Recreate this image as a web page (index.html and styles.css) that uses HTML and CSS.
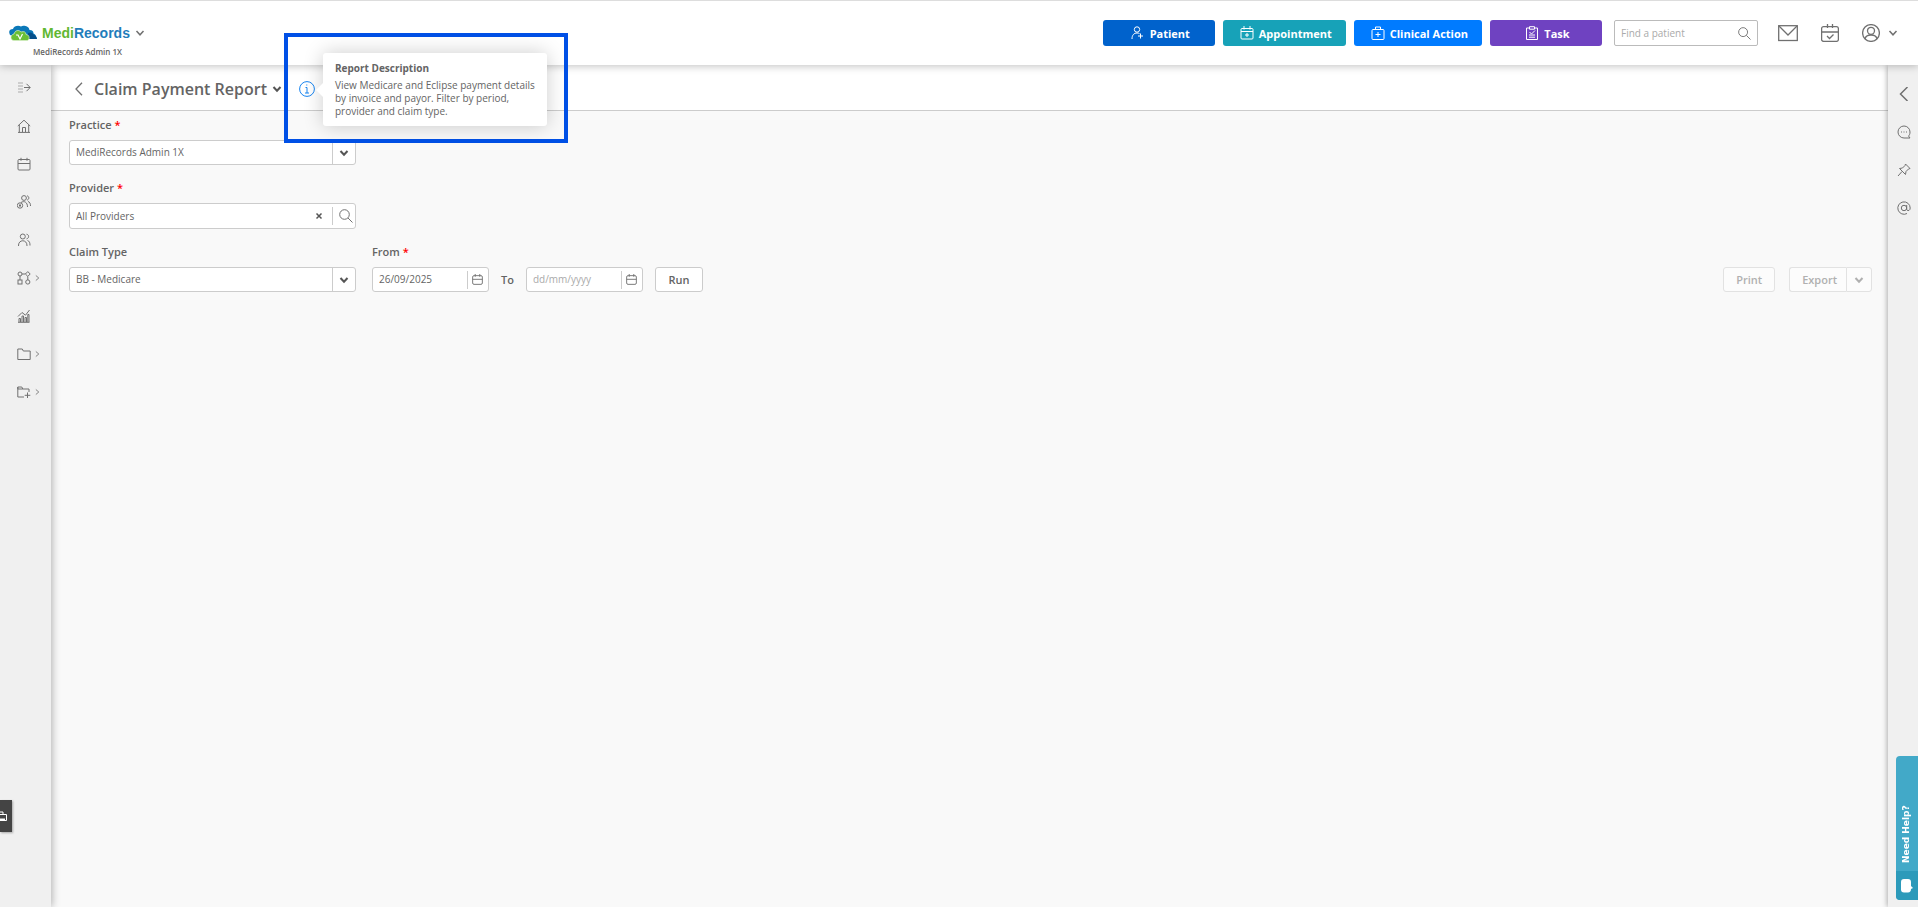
FILE: index.html
```
<!DOCTYPE html>
<html lang="en">
<head>
<meta charset="UTF-8">
<title>Claim Payment Report</title>
<link rel="stylesheet" href="styles.css">
</head>
<body>

<!-- shared icons -->
<svg class="sprite" aria-hidden="true">
  <symbol id="chev" viewBox="0 0 10 10"><path d="M1.500 3l3.500 3.800L8.500 3"/></symbol>
  <symbol id="chevRight" viewBox="0 0 6 8"><path d="M1 1l3.500 3L1 7"/></symbol>
  <symbol id="lens" viewBox="0 0 14 14"><circle cx="5.500" cy="5.500" r="4.800"/><path d="M9 9l4.500 4.500"/></symbol>
  <symbol id="cal" viewBox="0 0 12 12"><rect x=".7" y="1.800" width="10.600" height="9.500" rx="1.500"/><path d="M.7 5.800h10.600M3.500 0v3M8.500 0v3"/></symbol>
</svg>

<header class="header">
  <div class="brand">
    <a href="#" class="logo" aria-label="MediRecords">
      <svg class="cloud" viewBox="0 0 28 16">
        <path fill="#0b78b8" d="M1 10C-1 6 1 4 4 4 5 1 9 0 12 1.500 14 0 20 1 20.500 5c3 0 4 1.500 4 3.500 2 .5 3 3 3.500 5.500H12z"/>
        <path fill="#064f8a" d="M19 8c3-1.500 5 0 5.500 1.500 2 .5 3 2.500 3.500 4.500h-9z"/>
        <path fill="#6abf36" stroke="#d7efc6" stroke-width=".7" d="M5 15.500c-4 0-4-6 0-6.500C6 5 10 4.500 12 7c3-1 5 0 5 2.500 4 0 4 6 1 6z"/>
        <path fill="none" stroke="#fff" stroke-width="1.200" d="M7 10h2l2 4 2.500-5"/>
      </svg>
      <span class="name"><span class="medi">Medi</span>Records</span>
    </a>
    <button class="plain" aria-label="Change practice"><svg class="ic chev"><use href="#chev"/></svg></button>
    <div class="practice_name">MediRecords Admin 1X</div>
  </div>

  <div class="actions">
    <button class="act patient">
      <svg class="ic" viewBox="0 0 14 14"><circle cx="6" cy="3.500" r="2.700"/><path d="M1 13c0-4 2-6 5-6 1 0 1.800.2 2.500.6M9.500 7.500v5M7 10h5"/></svg>Patient</button>
    <button class="act appointment">
      <svg class="ic" viewBox="0 0 14 14"><rect x="1" y="2.500" width="12" height="10.500" rx="1"/><path d="M1 5.500h12M4 0v3.500M10 0v3.500M7 7v4M5 9h4"/></svg>Appointment</button>
    <button class="act clinical">
      <svg class="ic" viewBox="0 0 14 14"><rect x="1" y="3.500" width="12" height="10" rx="1"/><path d="M4.500 3V1h5v2M7 6v5M4.500 8.500h5"/></svg>Clinical Action</button>
    <button class="act task">
      <svg class="ic" viewBox="0 0 14 14"><path d="M4.500 2H1.500v11.500h11V2h-3M4.500.7h5v2.500h-5zM4.500 6l2 2L10 4.500M4 9h6M4 11.200h6"/></svg>Task</button>
  </div>

  <form class="search">
    <input type="text" placeholder="Find a patient" aria-label="Find a patient">
    <button type="button" class="plain" aria-label="Search"><svg class="ic lens"><use href="#lens"/></svg></button>
  </form>

  <div class="tools">
    <button class="plain" aria-label="Messages"><svg class="ic mail" viewBox="0 0 20 18"><rect x=".7" y="1.700" width="18.600" height="14.800"/><path d="M1 2l9 9 9-9"/></svg></button>
    <button class="plain" aria-label="Calendar"><svg class="ic" viewBox="0 0 18 18"><rect x=".6" y="2.600" width="16.800" height="14.800" rx="2"/><path d="M.6 8h16.800M6.500 0v4M11.500 0v4M6 12l2.500 2.500 4-4"/></svg></button>
    <button class="plain user" aria-label="Account">
      <svg class="ic" viewBox="0 0 18 18"><circle cx="9" cy="9" r="8.400"/><circle cx="9" cy="6.800" r="3.500"/><path d="M3 15c.5-3 3-4 6-4s5.500 1 6 4"/></svg>
      <svg class="ic chev"><use href="#chev"/></svg>
    </button>
  </div>
</header>

<div class="page">
  <nav class="menu">
    <a href="#" aria-label="Expand"><svg class="ic" viewBox="0 0 14 14"><path class="faint" d="M1 2h5M1 5h5M1 8h5M1 11h5"/><path d="M7 6.500h6M9.500 2.800l3.700 3.700-3.700 3.700"/></svg></a>
    <a href="#" aria-label="Home"><svg class="ic" viewBox="0 0 14 14"><path d="M.8 7L7 1.200 13.200 7M2.300 6v7.300M11.700 6v7.300M1 13.400h12M5.500 13V8.500h3V13"/></svg></a>
    <a href="#" aria-label="Appointments"><svg class="ic" viewBox="0 0 14 14"><rect x="1" y="2.500" width="12" height="10.500" rx="1"/><path d="M1 6.500h12M4 .8v3M10 .8v3"/></svg></a>
    <a href="#" aria-label="Billing"><svg class="ic" viewBox="0 0 14 14"><circle cx="7" cy="3" r="2.400"/><path d="M10 .8c2.400.4 2.400 3.800 0 4.300M4 7.500c3-2 6.500-.5 6.500 4.500M11 6.500c2 .5 2.500 2.500 2.500 4.500"/><circle cx="3" cy="10.500" r="2.700"/><path d="M3 9v3M2 10.500h2"/></svg></a>
    <a href="#" aria-label="Patients"><svg class="ic" viewBox="0 0 14 14"><circle cx="5.800" cy="3.500" r="2.500"/><path d="M1.500 13c-.5-7 9-7 8.500 0M9.500 1.200c2.800.3 2.800 4.200 0 4.700M10.500 7.500c2 .5 2.500 2.500 2.500 5"/></svg></a>
    <a href="#" aria-label="Workflow"><svg class="ic" viewBox="0 0 14 14"><circle cx="3" cy="3" r="2"/><path d="M10.800.6l2.400 2.400-2.400 2.400L8.400 3zM5 3h3.400M3 5v4M10.800 5.500V9"/><rect x="1" y="9" width="4" height="4"/><circle cx="10.800" cy="11" r="2.100"/></svg><svg class="ic arr"><use href="#chevRight"/></svg></a>
    <a href="#" aria-label="Reports"><svg class="ic" viewBox="0 0 14 14"><path d="M1 13.300h11.500M2 13V9.500h1.500V13M5 13V7h1.500v6M8 13V8.500h1.500V13M10.800 13V5.500H12V13M1 7.500l4-4 3.500 2.700L12.500 1"/></svg></a>
    <a href="#" aria-label="Files"><svg class="ic" viewBox="0 0 14 14"><path d="M.8 12.500V2h4.500l1 2h6.900v8.500z"/></svg><svg class="ic arr"><use href="#chevRight"/></svg></a>
    <a href="#" aria-label="Add file"><svg class="ic" viewBox="0 0 14 14"><path d="M7 12H.8V2h4l1 2H12v3M.8 2v2h5M10.500 7.500v5.500M7.700 10.300h5.600"/></svg><svg class="ic arr"><use href="#chevRight"/></svg></a>
  </nav>

  <main class="main">
    <div class="title_bar">
      <a href="#" class="back" aria-label="Back"><svg class="ic" viewBox="0 0 8 14"><path d="M7 .7L1 7l6 6.300"/></svg></a>
      <h1>Claim Payment Report</h1>
      <button class="plain" aria-label="Change report"><svg class="ic chev bold"><use href="#chev"/></svg></button>
      <div class="info">
        <button class="plain" aria-label="Report description"><svg class="ic info_icon" viewBox="0 0 16 16"><circle cx="8" cy="8" r="7.400"/><path d="M6.500 6.500H8V12M6 12h4M7.300 4h1"/></svg></button>
        <div class="highlight"></div>
        <div class="tooltip" role="tooltip">
          <strong>Report Description</strong>
          <p>View Medicare and Eclipse payment details by invoice and payor. Filter by period, provider and claim type.</p>
        </div>
      </div>
    </div>

    <form class="filters">
      <div class="field">
        <label for="practice">Practice <span class="req">*</span></label>
        <div class="box">
          <select id="practice"><option>MediRecords Admin 1X</option></select>
          <span class="drop"><svg class="ic chev bold"><use href="#chev"/></svg></span>
        </div>
      </div>
      <div class="field">
        <label for="provider">Provider <span class="req">*</span></label>
        <div class="box lookup">
          <input type="text" id="provider" value="All Providers">
          <button type="button" class="plain clear" aria-label="Clear"><svg class="ic bold" viewBox="0 0 8 8"><path d="M1.500 1.500l5 5M6.500 1.500l-5 5"/></svg></button>
          <button type="button" class="plain find" aria-label="Find provider"><svg class="ic lens"><use href="#lens"/></svg></button>
        </div>
      </div>
      <div class="row">
        <div class="field">
          <label for="claim">Claim Type</label>
          <div class="box">
            <select id="claim"><option>BB - Medicare</option></select>
            <span class="drop"><svg class="ic chev bold"><use href="#chev"/></svg></span>
          </div>
        </div>
        <div class="field date">
          <label for="from">From <span class="req">*</span></label>
          <div class="box">
            <input type="text" id="from" value="26/09/2025">
            <button type="button" class="plain pick" aria-label="Pick from date"><svg class="ic cal"><use href="#cal"/></svg></button>
          </div>
        </div>
        <label for="to" class="to">To</label>
        <div class="field date">
          <div class="box">
            <input type="text" id="to" placeholder="dd/mm/yyyy">
            <button type="button" class="plain pick" aria-label="Pick to date"><svg class="ic cal"><use href="#cal"/></svg></button>
          </div>
        </div>
        <button type="button" class="btn run">Run</button>
        <button type="button" class="btn print" disabled>Print</button>
        <div class="split">
          <button type="button" class="btn" disabled>Export</button>
          <button type="button" class="btn more" disabled aria-label="Export options"><svg class="ic chev bold"><use href="#chev"/></svg></button>
        </div>
      </div>
    </form>
  </main>

  <aside class="side">
    <a href="#" aria-label="Open panel"><svg class="ic big" viewBox="0 0 14 14"><path d="M10.500 0L3.500 7l7 7"/></svg></a>
    <a href="#" aria-label="Comments"><svg class="ic" viewBox="0 0 14 14"><path d="M13 13H7a6 6 0 1 1 6-6c0 2-.5 3-1.500 4zM4 7h1M6.500 7h1M9 7h1"/></svg></a>
    <a href="#" aria-label="Pinned"><svg class="ic" viewBox="0 0 14 14"><path d="M8.500 1L13 5.500l-1.500.5-2.500 2.500-.5 3L2.500 5.500l3-.5L8 2.500zM5 8.500L1 13"/></svg></a>
    <a href="#" aria-label="Mentions"><svg class="ic" viewBox="0 0 14 14"><circle cx="7" cy="7" r="2.700"/><path d="M9.700 4v4.200c0 2 3.500 2 3.500-1.200A6.200 6.200 0 1 0 10 12.500"/></svg></a>
  </aside>
</div>

<button class="tab" aria-label="Toolbox"><svg viewBox="0 0 12 14"><path fill="none" stroke="#fff" d="M0 3h3v2M0 5.500h6.500v6H0"/><path fill="#fff" d="M0 9.500h5v2H0z"/></svg></button>

<button class="help">
  <span class="help_text">Need Help?</span>
  <span class="help_chat"><svg viewBox="0 0 12 14"><path fill="#fff" d="M3 0h4c2 0 3 1 3 3v4l2 2-2 1c0 2-1 3.500-3 3.500H3c-2 0-3-1-3-3V3c0-2 1-3 3-3z"/></svg></span>
</button>

</body>
</html>
```
FILE: styles.css
```
* {
  box-sizing: border-box;
}
html, body {
  height: 100%;
  margin: 0;
}
body {
  display: flex;
  flex-direction: column;
  overflow: hidden;
  font: 500 10px/13px "Open Sans", "Noto Sans", sans-serif;
  color: #646464;
  background: #f9f9f9;
}
button, input, select {
  font: inherit;
  color: inherit;
}
a {
  color: inherit;
  text-decoration: none;
}
.sprite {
  display: none;
}

/* icons */
.ic {
  display: block;
  flex: none;
  width: 14px;
  height: 14px;
  fill: none;
  stroke: #707070;
  stroke-width: 1;
}
.chev {
  width: 10px;
  height: 10px;
  stroke-width: 1.5;
}
.bold {
  stroke: #555;
  stroke-width: 2;
}
.plain {
  display: flex;
  align-items: center;
  padding: 0;
  border: 0;
  background: none;
  cursor: pointer;
}

/* header */
.header {
  position: relative;
  z-index: 2;
  display: flex;
  align-items: flex-start;
  height: 65px;
  padding: 19px 20px 0 9px;
  border-top: 1px solid #ddd;
  background: #fff;
  box-shadow: 0 1px 8px rgba(0,0,0,0.25);
}
.brand {
  display: grid;
  grid-template-columns: auto auto;
  column-gap: 5px;
  align-items: center;
  margin-right: auto;
}
.logo {
  display: flex;
  align-items: center;
  gap: 5px;
}
.cloud {
  width: 28px;
  height: 16px;
}
.name {
  font: bold 14px/26px "Liberation Sans", Arial, sans-serif;
  color: #1f7dbb;
}
.medi {
  color: #62b832;
}
.practice_name {
  grid-column: 1 / 3;
  padding-left: 24px;
  font-size: 8px;
  font-weight: 600;
  line-height: 12px;
}
.actions {
  display: flex;
  gap: 8px;
  margin-right: 12px;
}
.act {
  display: flex;
  align-items: center;
  justify-content: center;
  gap: 5px;
  min-width: 112px;
  height: 26px;
  padding: 0 14px 0 17px;
  border: 0;
  border-radius: 3px;
  font-size: 11px;
  font-weight: 700;
  color: #fff;
  cursor: pointer;
}
.act .ic {
  stroke: #fff;
}
.patient { background: #0062cc; }
.appointment { background: #17a2b8; }
.clinical { background: #007bff; }
.task { background: #6f42c1; }
.search {
  display: flex;
  align-items: center;
  width: 144px;
  height: 26px;
  padding: 0 6px;
  border: 1px solid #bbb;
  border-radius: 2px;
}
.search input {
  flex: 1;
  min-width: 0;
  padding: 0;
  border: 0;
  outline: 0;
  background: none;
}
::placeholder {
  color: #aaa;
  opacity: 1;
}
.search .lens {
  width: 13px;
  height: 13px;
}
.tools {
  display: flex;
  align-items: center;
  gap: 23px;
  height: 26px;
  padding-left: 20px;
}
.tools .ic {
  width: 18px;
  height: 18px;
  stroke-width: 1.3;
}
.tools .mail {
  width: 20px;
}
.tools .chev {
  width: 10px;
  height: 10px;
  stroke-width: 1.5;
}
.user {
  gap: 8px;
}

/* page */
.page {
  display: flex;
  flex: 1;
  min-height: 0;
}
.menu, .side {
  position: relative;
  z-index: 1;
  display: flex;
  flex-direction: column;
  flex: none;
  background: #f0f0f0;
}
.menu {
  gap: 24px;
  width: 51px;
  padding: 16px 0 0 17px;
  box-shadow: 1px 0 8px rgba(0,0,0,0.3);
}
.menu a {
  display: flex;
  align-items: center;
  gap: 4px;
}
.menu .arr {
  width: 5px;
  height: 8px;
}
.faint {
  stroke: #aaa;
}
.side {
  gap: 24px;
  align-items: center;
  width: 30px;
  padding: 22px 0 0 1px;
  box-shadow: -1px 0 5px rgba(0,0,0,0.3);
}
.big {
  stroke-width: 1.5;
}
.main {
  flex: 1;
  min-width: 0;
}

/* title */
.title_bar {
  display: flex;
  align-items: center;
  height: 46px;
  padding: 2px 0 0 24px;
  border-bottom: 1px solid #ccc;
  background: #fff;
}
.back .ic {
  width: 8px;
  stroke-width: 1.3;
}
h1 {
  margin: 0 5px 0 11px;
  font-size: 16px;
  font-weight: 600;
  line-height: 22px;
}
.info {
  position: relative;
  z-index: 3;
  margin-left: 17px;
}
.info_icon {
  width: 16px;
  height: 16px;
  stroke: #1784f0;
}
.highlight {
  position: absolute;
  top: -48px;
  left: -15px;
  width: 284px;
  height: 110px;
  border: 4px solid #0050e6;
  pointer-events: none;
}
.tooltip {
  position: absolute;
  top: -28px;
  left: 24px;
  width: 224px;
  padding: 9px 8px 8px 12px;
  border-radius: 3px;
  background: #fff;
  box-shadow: 0 0 20px rgba(0,0,0,0.2);
}
.tooltip:before {
  content: "";
  position: absolute;
  top: 30px;
  left: -7px;
  border: 7px solid transparent;
  border-left: 0;
  border-right-color: #fff;
}
.tooltip p {
  margin: 4px 0 0;
  font-weight: 400;
}

/* filters */
.filters {
  display: flex;
  flex-direction: column;
  gap: 15px;
  padding: 6px 16px 0 18px;
}
.field {
  width: 287px;
}
.date {
  width: 117px;
}
.field label, .to {
  display: block;
  font-size: 11px;
  font-weight: 600;
  line-height: 16px;
}
.field label {
  margin-bottom: 7px;
}
.req {
  color: #f00;
}
.box {
  display: grid;
  grid-template-columns: 1fr auto;
  height: 25px;
  border: 1px solid #ccc;
  border-radius: 3px;
  background: #fff;
}
.box select {
  grid-area: 1 / 1 / 2 / 3;
  padding: 0 28px 0 6px;
  border: 0;
  outline: 0;
  background: none;
  -webkit-appearance: none;
  appearance: none;
}
.box input {
  min-width: 0;
  padding: 0 6px;
  border: 0;
  outline: 0;
  background: none;
}
.drop {
  grid-area: 1 / 2;
  display: flex;
  align-items: center;
  justify-content: center;
  width: 23px;
  border-left: 1px solid #ccc;
  pointer-events: none;
}
.lookup {
  grid-template-columns: 1fr auto auto;
  height: 26px;
}
.clear {
  padding-right: 9px;
}
.clear .ic {
  width: 8px;
  height: 8px;
  stroke-width: 1.5;
}
.find, .pick {
  align-self: center;
  height: 18px;
  border-left: 1px solid #ccc;
}
.find {
  width: 23px;
  padding-left: 6px;
}
.pick {
  width: 21px;
  padding-left: 4px;
}
.cal {
  width: 11px;
  height: 11px;
}
.row {
  display: flex;
  align-items: flex-end;
}
.row .field + .field {
  margin-left: 16px;
}
.to {
  padding: 0 12px 4px;
}
.btn {
  height: 25px;
  padding: 0 12px;
  border: 1px solid #ccc;
  border-radius: 3px;
  font-size: 11px;
  font-weight: 600;
  background: #fff;
}
.btn:disabled {
  border-color: #e2e2e2;
  color: #b0b0b0;
  background: #fcfcfc;
}
.run {
  min-width: 48px;
  margin-left: 12px;
}
.print {
  margin: 0 14px 0 auto;
}
.split {
  display: flex;
}
.split .btn:first-child {
  border-right: 0;
  border-radius: 3px 0 0 3px;
  padding: 0 9px 0 12px;
}
.more {
  padding: 0 7px;
  border-radius: 0 3px 3px 0;
}
.more .ic {
  stroke: #b0b0b0;
}

/* floating tabs */
.tab {
  position: fixed;
  bottom: 75px;
  left: 0;
  z-index: 4;
  width: 12px;
  height: 32px;
  padding: 0;
  border: 0;
  background: #444;
  box-shadow: 1px 1px 2px rgba(0,0,0,0.3);
}
.tab svg {
  display: block;
  width: 12px;
  height: 14px;
}
.help {
  position: fixed;
  right: 0;
  bottom: 7px;
  z-index: 4;
  display: flex;
  flex-direction: column;
  width: 22px;
  height: 144px;
  padding: 0;
  overflow: hidden;
  border: 0;
  border-radius: 4px 0 0 4px;
  font-size: 10px;
  font-weight: 800;
  color: #fff;
  background: #42a9c8;
}
.help_text {
  flex: 1;
  padding-top: 8px;
  font-family: "DejaVu Sans", sans-serif;
  font-size: 9px;
  font-weight: 700;
  line-height: 20px;
  text-align: left;
  writing-mode: vertical-rl;
  transform: rotate(180deg);
}
.help_chat {
  display: flex;
  align-items: center;
  justify-content: center;
  width: 22px;
  height: 29px;
  background: #2c9aba;
}
.help_chat svg {
  width: 12px;
  height: 14px;
}
```
